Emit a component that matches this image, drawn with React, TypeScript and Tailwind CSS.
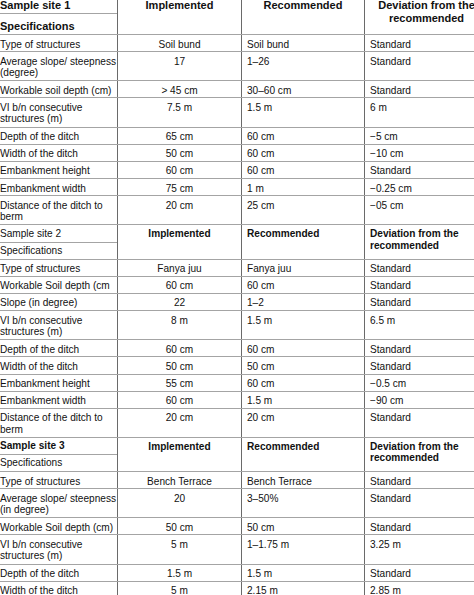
import React from 'react';

type Row = [string, string, string, string];

const site1: Row[] = [
  ['Type of structures', 'Soil bund', 'Soil bund', 'Standard'],
  ['Average slope/ steepness\n(degree)', '17', '1–26', 'Standard'],
  ['Workable soil depth (cm)', '> 45 cm', '30–60 cm', 'Standard'],
  ['VI b/n consecutive\nstructures (m)', '7.5 m', '1.5 m', '6 m'],
  ['Depth of the ditch', '65 cm', '60 cm', '−5 cm'],
  ['Width of the ditch', '50 cm', '60 cm', '−10 cm'],
  ['Embankment height', '60 cm', '60 cm', 'Standard'],
  ['Embankment width', '75 cm', '1 m', '−0.25 cm'],
  ['Distance of the ditch to\nberm', '20 cm', '25 cm', '−05 cm'],
];

const site2: Row[] = [
  ['Type of structures', 'Fanya juu', 'Fanya juu', 'Standard'],
  ['Workable Soil depth (cm', '60 cm', '60 cm', 'Standard'],
  ['Slope (in degree)', '22', '1–2', 'Standard'],
  ['VI b/n consecutive\nstructures (m)', '8 m', '1.5 m', '6.5 m'],
  ['Depth of the ditch', '60 cm', '60 cm', 'Standard'],
  ['Width of the ditch', '50 cm', '50 cm', 'Standard'],
  ['Embankment height', '55 cm', '60 cm', '−0.5 cm'],
  ['Embankment width', '60 cm', '1.5 m', '−90 cm'],
  ['Distance of the ditch to\nberm', '20 cm', '20 cm', 'Standard'],
];

const site3: Row[] = [
  ['Type of structures', 'Bench Terrace', 'Bench Terrace', 'Standard'],
  ['Average slope/ steepness\n(in degree)', '20', '3–50%', 'Standard'],
  ['Workable Soil depth (cm)', '50 cm', '50 cm', 'Standard'],
  ['VI b/n consecutive\nstructures (m)', '5 m', '1–1.75 m', '3.25 m'],
  ['Depth of the ditch', '1.5 m', '1.5 m', 'Standard'],
  ['Width of the ditch', '5 m', '2.15 m', '2.85 m'],
];

function DataRow({ r }: { r: Row }) {
  const tall = r[0].includes('\n');
  return (
    <div className={`flex border-b border-[#a4a4a4] ${tall ? 'h-[29.3px]' : 'h-[17.1px]'}`}>
      <div className="w-[118px] shrink-0 border-r border-[#6a6a6a] pt-[3.5px] whitespace-pre overflow-hidden">{r[0]}</div>
      <div className="w-[124px] shrink-0 border-r border-[#6a6a6a] pt-[3.5px] text-center">{r[1]}</div>
      <div className="w-[123px] shrink-0 border-r border-[#6a6a6a] pt-[3.5px] pl-[5px]">{r[2]}</div>
      <div className="w-[123px] shrink-0 pt-[3.5px] pl-[5px]">{r[3]}</div>
    </div>
  );
}

export default function App() {
  return (
    <div className="w-[474px] h-[595px] overflow-hidden bg-white font-['Liberation_Sans',Arial,sans-serif] text-[10.1px] leading-[11.5px] text-[#111]">
      {/* Sample site 1 header */}
      <div className="flex h-[35px] border-b border-[#a4a4a4] text-[11px] font-bold">
        <div className="w-[118px] shrink-0 border-r border-[#6a6a6a] flex flex-col">
          <div className="h-[14px] border-b border-[#a4a4a4] leading-[11px]">Sample site 1</div>
          <div className="pt-[6.5px] leading-[11px]">Specifications</div>
        </div>
        <div className="w-[124px] shrink-0 border-r border-[#6a6a6a] text-center leading-[13px] -mt-[1px]">Implemented</div>
        <div className="w-[123px] shrink-0 border-r border-[#6a6a6a] text-center leading-[13px] -mt-[1px]">Recommended</div>
        <div className="w-[123px] shrink-0 text-center leading-[13px] -mt-[1px]">
          Deviation from the
          <br />
          recommended
        </div>
      </div>
      {site1.map((r, i) => (
        <DataRow key={i} r={r} />
      ))}

      {/* Sample site 2 header */}
      <div className="flex h-[34.3px] border-b border-[#a4a4a4]">
        <div className="w-[118px] shrink-0 border-r border-[#6a6a6a] flex flex-col">
          <div className="h-[17.5px] border-b border-[#a4a4a4] pt-[3px]">Sample site 2</div>
          <div className="pt-[2px]">Specifications</div>
        </div>
        <div className="w-[124px] shrink-0 border-r border-[#6a6a6a] text-center font-bold pt-[3px]">Implemented</div>
        <div className="w-[123px] shrink-0 border-r border-[#6a6a6a] font-bold pt-[3px] pl-[5px]">Recommended</div>
        <div className="w-[123px] shrink-0 font-bold pt-[3px] pl-[5px] leading-[12px]">
          Deviation from the
          <br />
          recommended
        </div>
      </div>
      {site2.map((r, i) => (
        <DataRow key={i} r={r} />
      ))}

      {/* Sample site 3 header */}
      <div className="flex h-[34px] border-b border-[#a4a4a4]">
        <div className="w-[118px] shrink-0 border-r border-[#6a6a6a] flex flex-col">
          <div className="h-[16.6px] border-b border-[#a4a4a4] pt-[2px] font-bold">Sample site 3</div>
          <div className="pt-[2.5px]">Specifications</div>
        </div>
        <div className="w-[124px] shrink-0 border-r border-[#6a6a6a] text-center font-bold pt-[2.5px]">Implemented</div>
        <div className="w-[123px] shrink-0 border-r border-[#6a6a6a] font-bold pt-[2.5px] pl-[5px]">Recommended</div>
        <div className="w-[123px] shrink-0 font-bold pt-[2.5px] pl-[5px] leading-[11.7px]">
          Deviation from the
          <br />
          recommended
        </div>
      </div>
      {site3.map((r, i) => (
        <DataRow key={i} r={r} />
      ))}
    </div>
  );
}
